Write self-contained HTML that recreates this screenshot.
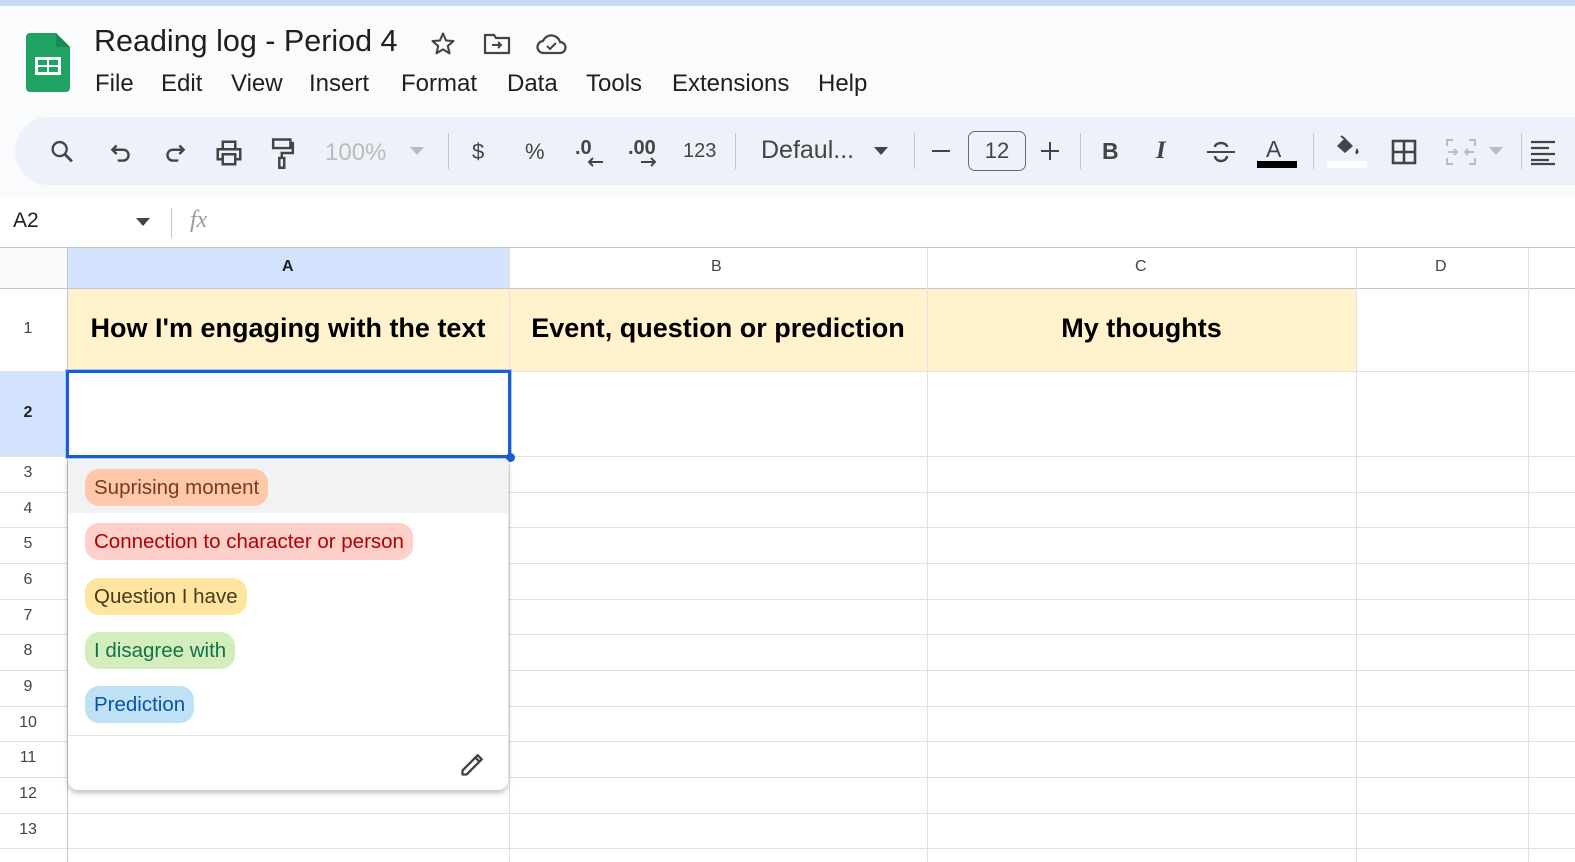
<!DOCTYPE html>
<html><head><meta charset="utf-8"><style>
*{margin:0;padding:0;box-sizing:border-box}
body{width:1575px;height:862px;overflow:hidden;background:#fff;font-family:"Liberation Sans",Arial,sans-serif;position:relative;color:#1f1f1f}
.a{position:absolute}
.hl{position:absolute;left:0;width:1575px;height:1px;background:#e1e1e1}
.vl{position:absolute;top:248px;width:1px;height:614px;background:#e1e1e1}
.rn{position:absolute;left:0;width:56px;text-align:center;font-size:16px;color:#444}
.chip{position:absolute;left:85px;height:37px;border-radius:14px;padding:0 9px;font-size:20.5px;line-height:37px}
svg{position:absolute}
</style></head><body>
<div class="a" style="left:0;top:0;width:1575px;height:6px;background:#c9d9f2"></div>
<div class="a" style="left:0;top:6px;width:1575px;height:192px;background:#f9fbfd"></div>
<svg style="left:26px;top:33px" width="44" height="59" viewBox="0 0 44 59"><path d="M4 0H30L44 14V55a4 4 0 0 1-4 4H4a4 4 0 0 1-4-4V4a4 4 0 0 1 4-4z" fill="#1ea362"/><path d="M30 0L44 14H32a2 2 0 0 1-2-2z" fill="#188a50"/><rect x="9" y="24" width="26" height="18" fill="#fff"/><rect x="12" y="27" width="9" height="5" fill="#1ea362"/><rect x="23" y="27" width="9" height="5" fill="#1ea362"/><rect x="12" y="34" width="9" height="5" fill="#1ea362"/><rect x="23" y="34" width="9" height="5" fill="#1ea362"/></svg>
<div class="a" style="left:94px;top:24px;font-size:30.5px;color:#1f1f1f">Reading log - Period 4</div>
<svg style="left:429px;top:30px" width="28" height="28" viewBox="0 0 24 24"><path d="M12 3l2.6 6 6.4.5-4.9 4.2 1.5 6.3L12 16.6 6.4 20l1.5-6.3L3 9.5l6.4-.5z" fill="none" stroke="#444" stroke-width="1.8" stroke-linejoin="round"/></svg>
<svg style="left:483px;top:32px" width="29" height="24" viewBox="0 0 29 24"><path d="M2 3h9l2 3h13v15H2z" fill="none" stroke="#444" stroke-width="2.2" stroke-linejoin="round"/><path d="M9 13h9M15 10l3 3-3 3" fill="none" stroke="#444" stroke-width="2"/></svg>
<svg style="left:536px;top:32px" width="32" height="24" viewBox="0 0 32 24"><path d="M8 21a6 6 0 0 1-1-12 9 9 0 0 1 17 1 5.5 5.5 0 0 1 0 11z" fill="none" stroke="#444" stroke-width="2.2"/><path d="M11 14l3 3 6-6" fill="none" stroke="#444" stroke-width="2"/></svg>
<div class="a" style="left:95px;top:70px;font-size:24px;color:#1f1f1f">
<span class="a" style="left:0">File</span><span class="a" style="left:66px">Edit</span><span class="a" style="left:136px">View</span><span class="a" style="left:214px">Insert</span><span class="a" style="left:306px">Format</span><span class="a" style="left:412px">Data</span><span class="a" style="left:491px">Tools</span><span class="a" style="left:577px">Extensions</span><span class="a" style="left:723px">Help</span></div>
<div class="a" style="left:15px;top:117px;width:1600px;height:68px;border-radius:34px;background:#edf2fa"></div>
<svg style="left:48px;top:138px" width="28" height="28" viewBox="0 0 24 24"><circle cx="10" cy="9.5" r="6" fill="none" stroke="#444" stroke-width="2"/><path d="M14.5 14l6 6" stroke="#444" stroke-width="2.4"/></svg>
<svg style="left:108px;top:140px" width="26" height="26" viewBox="0 0 24 24"><path d="M8 5L4 9l4 4M4 9h10a5 5 0 0 1 0 10H9" fill="none" stroke="#444" stroke-width="2.2"/></svg>
<svg style="left:162px;top:140px" width="26" height="26" viewBox="0 0 24 24"><path d="M16 5l4 4-4 4M20 9H10a5 5 0 0 0 0 10h5" fill="none" stroke="#444" stroke-width="2.2"/></svg>
<svg style="left:214px;top:138px" width="30" height="30" viewBox="0 0 24 24"><path d="M7 8V3h10v5M7 17H3V9h18v8h-4M7 13h10v8H7z" fill="none" stroke="#444" stroke-width="2"/></svg>
<svg style="left:270px;top:137px" width="26" height="32" viewBox="0 0 20 26"><path d="M2 2h14v7H2zM16 5h2v8H9v4M7 17h4v8H7z" fill="none" stroke="#444" stroke-width="2"/></svg>
<div class="a" style="left:325px;top:139px;font-size:24px;color:#bbb">100%</div>
<svg style="left:410px;top:147px" width="14" height="8"><path d="M0 0h14L7 8z" fill="#bbb"/></svg>
<div class="a" style="left:448px;top:133px;width:1px;height:36px;background:#c7c7c7"></div>
<div class="a" style="left:472px;top:139px;font-size:22px;color:#444">$</div>
<div class="a" style="left:525px;top:139px;font-size:22px;color:#444">%</div>
<div class="a" style="left:575px;top:137px;font-size:20px;color:#444;font-weight:bold">.0</div>
<svg style="left:586px;top:156px" width="18" height="12"><path d="M17 6H3M7 2L3 6l4 4" fill="none" stroke="#444" stroke-width="2"/></svg>
<div class="a" style="left:628px;top:137px;font-size:20px;color:#444;font-weight:bold">.00</div>
<svg style="left:640px;top:156px" width="18" height="12"><path d="M1 6h14M11 2l4 4-4 4" fill="none" stroke="#444" stroke-width="2"/></svg>
<div class="a" style="left:683px;top:140px;font-size:20px;color:#444">123</div>
<div class="a" style="left:735px;top:133px;width:1px;height:36px;background:#c7c7c7"></div>
<div class="a" style="left:761px;top:136px;font-size:25px;color:#444">Defaul...</div>
<svg style="left:874px;top:147px" width="14" height="8"><path d="M0 0h14L7 8z" fill="#444"/></svg>
<div class="a" style="left:914px;top:133px;width:1px;height:36px;background:#c7c7c7"></div>
<div class="a" style="left:932px;top:150px;width:18px;height:2px;background:#444"></div>
<div class="a" style="left:968px;top:131px;width:58px;height:40px;border:1.5px solid #6b6b6b;border-radius:7px;font-size:22px;line-height:37px;text-align:center;color:#444">12</div>
<div class="a" style="left:1041px;top:150px;width:18px;height:2px;background:#444"></div>
<div class="a" style="left:1049px;top:142px;width:2px;height:18px;background:#444"></div>
<div class="a" style="left:1080px;top:133px;width:1px;height:36px;background:#c7c7c7"></div>
<div class="a" style="left:1102px;top:138px;font-size:23px;color:#444;font-weight:bold">B</div>
<div class="a" style="left:1156px;top:137px;font-size:25px;color:#444;font-style:italic;font-family:'Liberation Serif',serif;font-weight:bold">I</div>
<svg style="left:1206px;top:139px" width="30" height="26" viewBox="0 0 30 26"><path d="M1 13h28" stroke="#444" stroke-width="2"/><path d="M21 8a6 4 0 0 0-12 0M9 17a6 5 0 0 0 12 0" fill="none" stroke="#444" stroke-width="2.4"/></svg>
<div class="a" style="left:1266px;top:136px;font-size:23px;color:#444">A</div>
<div class="a" style="left:1257px;top:161px;width:40px;height:7px;background:#000"></div>
<div class="a" style="left:1313px;top:133px;width:1px;height:36px;background:#c7c7c7"></div>
<svg style="left:1333px;top:134px" width="28" height="26" viewBox="0 0 28 26"><path d="M4 12l8-8 8 8-8 7z" fill="#444"/><path d="M8 2l4 3" stroke="#444" stroke-width="2"/><path d="M24 14c2 3 2 5 0 6s-2-3 0-6z" fill="#444"/></svg>
<div class="a" style="left:1327px;top:161px;width:40px;height:7px;background:#fff"></div>
<svg style="left:1391px;top:139px" width="26" height="26"><rect x="2" y="2" width="22" height="22" fill="none" stroke="#444" stroke-width="2.6"/><path d="M13 2v22M2 13h22" stroke="#444" stroke-width="2.6"/></svg>
<svg style="left:1446px;top:139px" width="30" height="26" viewBox="0 0 30 26"><path d="M7 1H1v6M1 19v6h6M23 1h6v6M29 19v6h-6M2 13h9M8 10l3 3-3 3M28 13h-9M22 10l-3 3 3 3" fill="none" stroke="#bbb" stroke-width="2"/></svg>
<svg style="left:1489px;top:147px" width="14" height="8"><path d="M0 0h14L7 8z" fill="#bbb"/></svg>
<div class="a" style="left:1521px;top:133px;width:1px;height:36px;background:#c7c7c7"></div>
<svg style="left:1531px;top:140px" width="26" height="26"><path d="M0 2h24M0 8h18M0 14h24M0 20h18M0 24h24" stroke="#444" stroke-width="2.2"/></svg>
<div class="a" style="left:13px;top:209px;font-size:21px;color:#1f1f1f">A2</div>
<svg style="left:136px;top:218px" width="14" height="8"><path d="M0 0h14L7 8z" fill="#444"/></svg>
<div class="a" style="left:171px;top:208px;width:1px;height:30px;background:#c7c7c7"></div>
<div class="a" style="left:190px;top:207px;font-size:24px;color:#999;font-style:italic;font-family:'Liberation Serif',serif">fx</div>
<div class="a" style="left:0;top:248px;width:1575px;height:40px;background:#fff"></div>
<div class="a" style="left:0;top:248px;width:67px;height:40px;background:#f8f9fa"></div>
<div class="a" style="left:67px;top:248px;width:442px;height:40px;background:#d3e3fd"></div>
<div class="a" style="left:67px;top:288px;width:1289px;height:83px;background:#fff2cc"></div>
<div class="a" style="left:0;top:371px;width:67px;height:85px;background:#d3e3fd"></div>
<div class="hl" style="top:247px;background:#c4c7c5"></div>
<div class="hl" style="top:288px;background:#c4c7c5"></div>
<div class="hl" style="top:371px"></div>
<div class="hl" style="top:456px"></div>
<div class="hl" style="top:492px"></div>
<div class="hl" style="top:527px"></div>
<div class="hl" style="top:563px"></div>
<div class="hl" style="top:599px"></div>
<div class="hl" style="top:634px"></div>
<div class="hl" style="top:670px"></div>
<div class="hl" style="top:706px"></div>
<div class="hl" style="top:741px"></div>
<div class="hl" style="top:777px"></div>
<div class="hl" style="top:813px"></div>
<div class="hl" style="top:848px"></div>
<div class="vl" style="left:67px;background:#c4c7c5"></div>
<div class="vl" style="left:509px"></div>
<div class="vl" style="left:927px"></div>
<div class="vl" style="left:1356px"></div>
<div class="vl" style="left:1528px"></div>
<div class="a" style="left:282px;top:258px;font-size:16px;font-weight:bold;color:#1f1f1f">A</div>
<div class="a" style="left:711px;top:258px;font-size:16px;color:#444">B</div>
<div class="a" style="left:1135px;top:258px;font-size:16px;color:#444">C</div>
<div class="a" style="left:1435px;top:258px;font-size:16px;color:#444">D</div>
<div class="a" style="left:67px;top:313px;width:442px;text-align:center;font-size:27px;font-weight:bold;color:#000;white-space:nowrap">How I'm engaging with the text</div>
<div class="a" style="left:509px;top:313px;width:418px;text-align:center;font-size:27px;font-weight:bold;color:#000;white-space:nowrap">Event, question or prediction</div>
<div class="a" style="left:927px;top:313px;width:429px;text-align:center;font-size:27px;font-weight:bold;color:#000">My thoughts</div>
<div class="rn" style="top:320px">1</div>
<div class="rn" style="top:404px;font-weight:bold;color:#1f1f1f">2</div>
<div class="rn" style="top:464px">3</div>
<div class="rn" style="top:500px">4</div>
<div class="rn" style="top:535px">5</div>
<div class="rn" style="top:571px">6</div>
<div class="rn" style="top:607px">7</div>
<div class="rn" style="top:642px">8</div>
<div class="rn" style="top:678px">9</div>
<div class="rn" style="top:714px">10</div>
<div class="rn" style="top:749px">11</div>
<div class="rn" style="top:785px">12</div>
<div class="rn" style="top:821px">13</div>
<div class="a" style="left:66px;top:370px;width:445px;height:88px;border:3px solid #1a5fd0;outline:1px solid #a8c7fa;background:#fff"></div>
<div class="a" style="left:506px;top:453px;width:9px;height:9px;border-radius:50%;background:#1a5fd0"></div>
<div class="a" style="left:68px;top:460px;width:440px;height:330px;background:#fff;border-radius:0 0 10px 10px;box-shadow:0 3px 6px rgba(0,0,0,.25)"></div>
<div class="a" style="left:68px;top:460px;width:440px;height:53px;background:#f0f2f4"></div>
<div class="chip" style="top:469px;background:#ffc8aa;color:#7a3a1c">Suprising moment</div>
<div class="chip" style="top:523px;background:#ffcfc9;color:#b10202">Connection to character or person</div>
<div class="chip" style="top:578px;background:#ffe5a0;color:#473821">Question I have</div>
<div class="chip" style="top:632px;background:#d4edbc;color:#11734b">I disagree with</div>
<div class="chip" style="top:686px;background:#bfe1f6;color:#0a53a8">Prediction</div>
<div class="a" style="left:68px;top:735px;width:440px;height:1px;background:#e1e1e1"></div>
<svg style="left:459px;top:750px" width="28" height="28" viewBox="0 0 24 24"><path d="M3 21v-3.5L16 4.5l3.5 3.5L6.5 21zM14 6.5l3.5 3.5" fill="none" stroke="#444" stroke-width="2" stroke-linejoin="round"/></svg>
</body></html>
